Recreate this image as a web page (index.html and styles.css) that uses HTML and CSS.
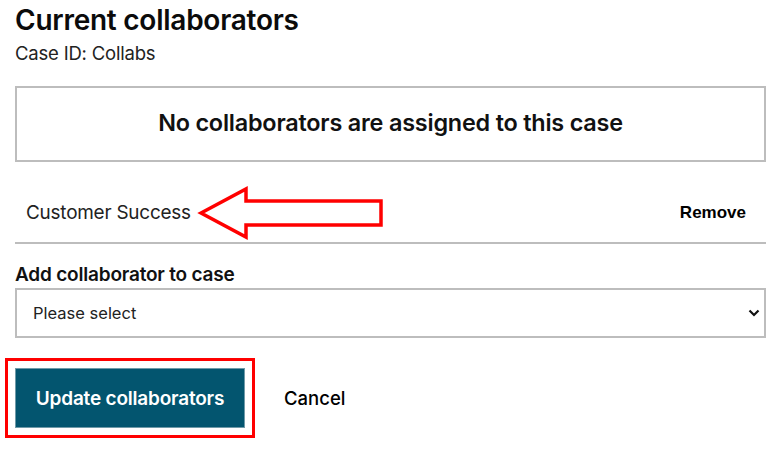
FILE: index.html
```html
<!DOCTYPE html>
<html lang="en">
<head>
<meta charset="utf-8">
<title>Current collaborators</title>
<link rel="stylesheet" href="styles.css">
</head>
<body>
<main class="page">
  <h1 class="title">Current collaborators</h1>
  <p class="case-id">Case ID: Collabs</p>
  <div class="empty-box">No collaborators are assigned to this case</div>
  <div class="collab-row">
    <span class="collab-name">Customer Success</span>
    <svg class="annot-arrow" width="190" height="54" viewBox="0 0 190 54" aria-hidden="true">
      <path d="M4 27 L49 3 L49 15 L184 15 L184 39 L49 39 L49 51 Z" fill="none" stroke="#ff0000" stroke-width="3.5" stroke-linejoin="miter"/>
    </svg>
    <a class="remove-link" href="#">Remove</a>
  </div>
  <label class="field-label" for="collab-select">Add collaborator to case</label>
  <div class="select-wrap">
    <select id="collab-select" class="select">
      <option>Please select</option>
    </select>
    <svg class="chevron" width="12" height="8" viewBox="0 0 12 8" aria-hidden="true">
      <path d="M1.5 1.5 L6 6 L10.5 1.5" fill="none" stroke="#111" stroke-width="2.2"/>
    </svg>
  </div>
  <div class="actions">
    <span class="highlight">
      <button class="btn-primary" type="button">Update collaborators</button>
    </span>
    <a class="cancel-link" href="#">Cancel</a>
  </div>
</main>
</body>
</html>
```

FILE: styles.css
```css
* { box-sizing: border-box; }
html, body { margin: 0; padding: 0; background: #fff; }
body {
  font-family: "Inter", "Roboto", "Liberation Sans", sans-serif;
  color: #111;
}
.page {
  width: 773px;
  padding: 0 7px 23px 15px;
}
.title {
  margin: 0;
  padding-top: 3px;
  font-size: 28px;
  line-height: 34px;
  font-weight: 600;
  letter-spacing: -0.25px;
  color: #0b0b0b;
}
.case-id {
  margin: 5px 0 0;
  font-size: 18.5px;
  line-height: 22px;
  font-weight: 400;
  color: #222;
  letter-spacing: -0.2px;
}
.empty-box {
  margin-top: 22px;
  height: 76px;
  border: 2px solid #bdbdbd;
  display: flex;
  align-items: center;
  justify-content: center;
  padding-bottom: 3px;
  font-size: 23.4px;
  font-weight: 600;
  color: #111;
  letter-spacing: -0.2px;
}
.collab-row {
  position: relative;
  margin-top: 20px;
  height: 62px;
  border-bottom: 2px solid #bdbdbd;
  display: flex;
  align-items: center;
  justify-content: space-between;
  padding: 1px 20px 0 11px;
}
.collab-name {
  font-size: 18.9px;
  font-weight: 400;
  color: #222;
  letter-spacing: -0.2px;
}
.annot-arrow {
  position: absolute;
  left: 182px;
  top: 4px;
}
.remove-link {
  font-family: "Liberation Sans", Arial, sans-serif;
  font-size: 17px;
  font-weight: 700;
  color: #000;
  text-decoration: none;
}
.field-label {
  display: block;
  margin-top: 19px;
  font-size: 19px;
  line-height: 24px;
  font-weight: 600;
  color: #111;
  letter-spacing: -0.2px;
}
.select-wrap {
  position: relative;
  margin-top: 1px;
}
.select {
  display: block;
  width: 100%;
  height: 50px;
  appearance: none;
  -webkit-appearance: none;
  border: 2px solid #bdbdbd;
  border-radius: 0;
  background: #fff;
  padding: 0 16px;
  font-family: "Inter", "Roboto", "Liberation Sans", sans-serif;
  font-size: 16.5px;
  color: #222;
}
.chevron {
  position: absolute;
  right: 6px;
  top: 21px;
}
.actions {
  margin-top: 20px;
  margin-left: -10px;
  display: flex;
  align-items: center;
  gap: 29px;
}
.highlight {
  display: block;
  border: 3px solid #ff0000;
  padding: 7px;
}
.btn-primary {
  display: block;
  width: 230px;
  height: 60px;
  background: #03556f;
  border: 1px solid #6f9aa8;
  color: #fff;
  font-family: "Inter", "Roboto", "Liberation Sans", sans-serif;
  font-size: 19px;
  font-weight: 600;
  letter-spacing: -0.2px;
  cursor: pointer;
}
.cancel-link {
  font-size: 18.5px;
  font-weight: 500;
  color: #000;
  text-decoration: none;
}
```
